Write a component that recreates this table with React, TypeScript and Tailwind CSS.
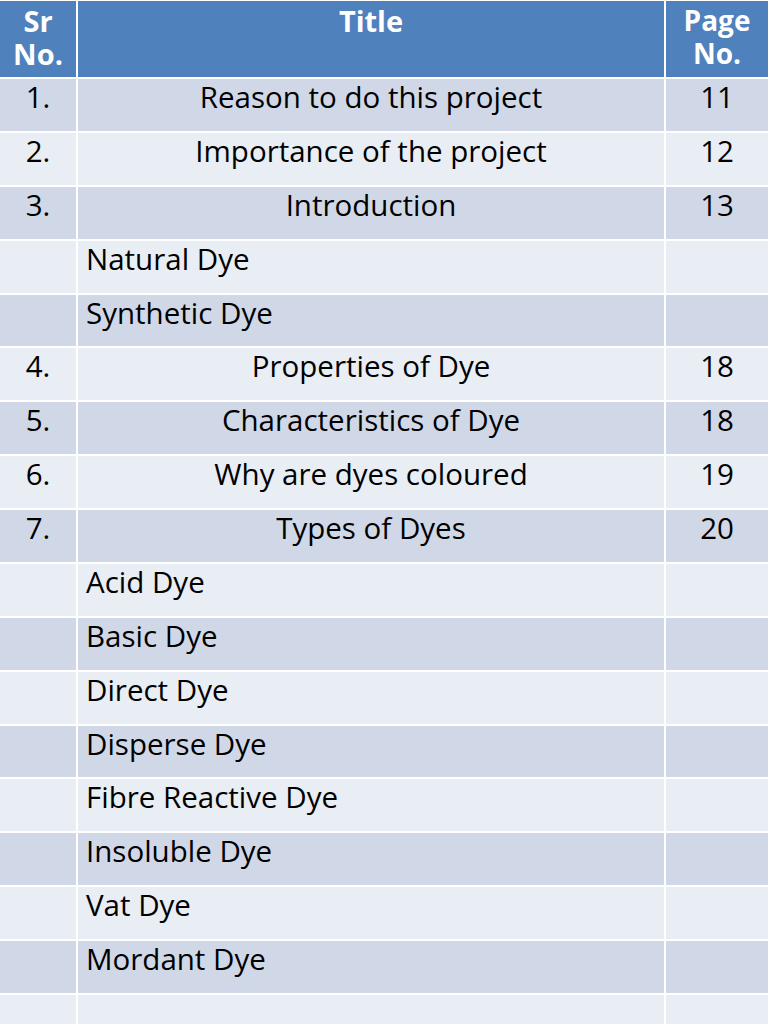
import React from "react";

type Row = { sr: string; title: string; page: string; sub?: boolean };

const rows: Row[] = [
  { sr: "1.", title: "Reason to do this project", page: "11" },
  { sr: "2.", title: "Importance of the project", page: "12" },
  { sr: "3.", title: "Introduction", page: "13" },
  { sr: "", title: "Natural Dye", page: "", sub: true },
  { sr: "", title: "Synthetic Dye", page: "", sub: true },
  { sr: "4.", title: "Properties of Dye", page: "18" },
  { sr: "5.", title: "Characteristics of Dye", page: "18" },
  { sr: "6.", title: "Why are dyes coloured", page: "19" },
  { sr: "7.", title: "Types of Dyes", page: "20" },
  { sr: "", title: "Acid Dye", page: "", sub: true },
  { sr: "", title: "Basic Dye", page: "", sub: true },
  { sr: "", title: "Direct Dye", page: "", sub: true },
  { sr: "", title: "Disperse Dye", page: "", sub: true },
  { sr: "", title: "Fibre Reactive Dye", page: "", sub: true },
  { sr: "", title: "Insoluble Dye", page: "", sub: true },
  { sr: "", title: "Vat Dye", page: "", sub: true },
  { sr: "", title: "Mordant Dye", page: "", sub: true },
  { sr: "", title: "", page: "", sub: true },
];

export default function App() {
  return (
    <div
      className="w-[768px] h-[1024px] overflow-hidden bg-white pt-px"
      style={{ fontFamily: '"Open Sans", "Noto Sans", sans-serif' }}
    >
      <div className="grid grid-cols-[76px_586px_102px] gap-[2px] bg-white">
        <div className="h-[76px] bg-[#4f81bd] text-white font-bold text-[29px] leading-[33px] text-center pt-[3px]">
          Sr
          <br />
          No.
        </div>
        <div className="h-[76px] bg-[#4f81bd] text-white font-bold text-[29px] leading-[33px] text-center pt-[3px]">
          Title
        </div>
        <div className="h-[76px] bg-[#4f81bd] text-white font-bold text-[28px] leading-[33px] text-center pt-[3px]">
          Page
          <br />
          No.
        </div>
        {rows.map((r, i) => {
          const bg = i % 2 === 0 ? "bg-[#d0d8e8]" : "bg-[#e9edf4]";
          return (
            <React.Fragment key={i}>
              <div className={`h-[51.88px] ${bg} text-black text-[29.5px] leading-[1.2] text-center`}>
                {r.sr}
              </div>
              <div
                className={`h-[51.88px] ${bg} text-black text-[29.5px] leading-[1.2] whitespace-nowrap ${
                  r.sub ? "text-left pl-[8px]" : "text-center"
                }`}
              >
                {r.title}
              </div>
              <div className={`h-[51.88px] ${bg} text-black text-[29.5px] leading-[1.2] text-center`}>
                {r.page}
              </div>
            </React.Fragment>
          );
        })}
      </div>
    </div>
  );
}
